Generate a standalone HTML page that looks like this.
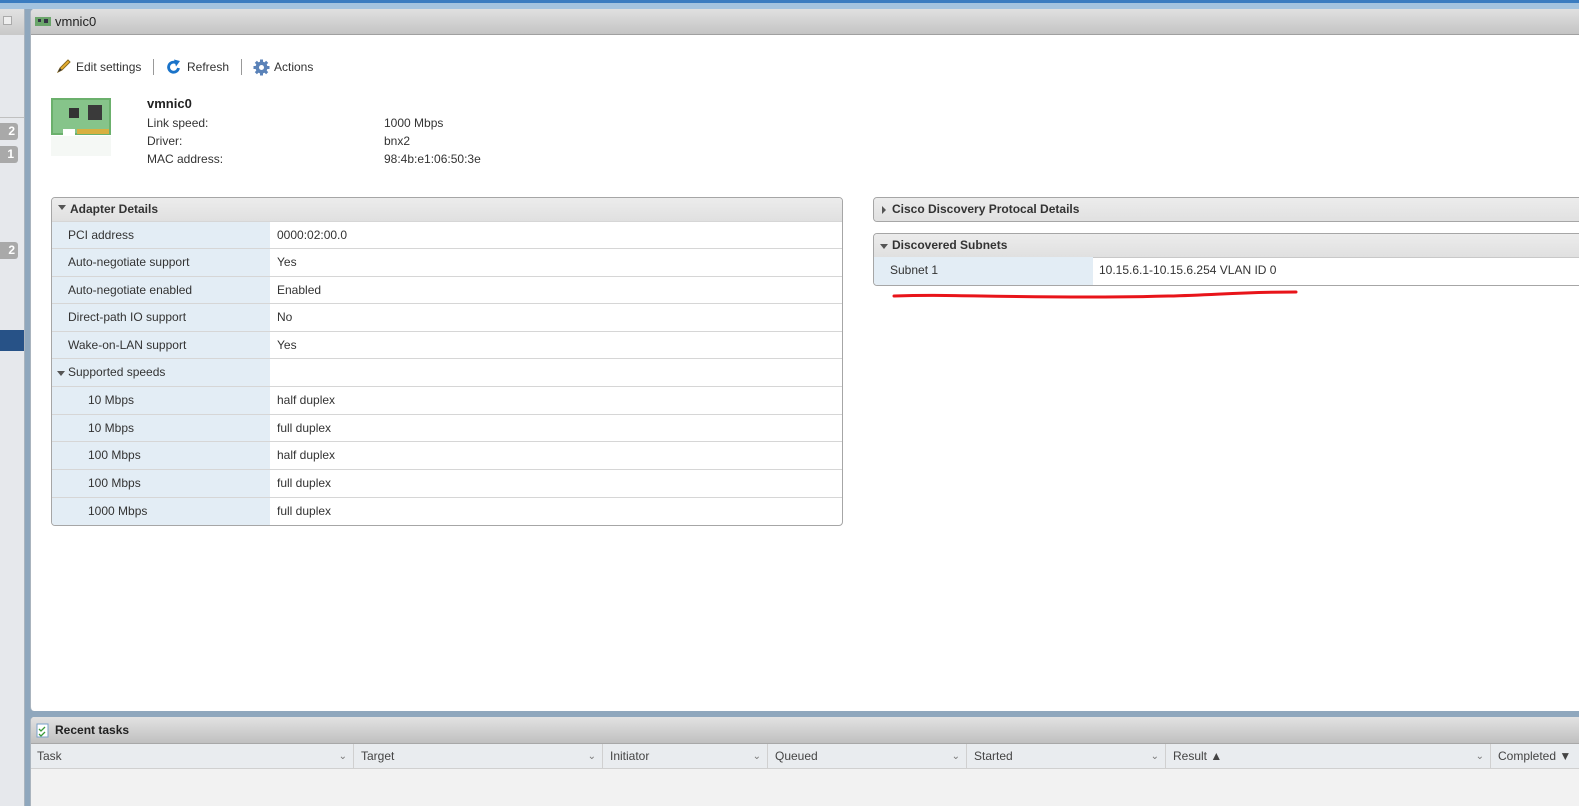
<!DOCTYPE html>
<html><head><meta charset="utf-8"><style>
*{box-sizing:border-box;margin:0;padding:0}
body{width:1579px;height:806px;overflow:hidden;position:relative;background:#8fa7bd;font-family:"Liberation Sans",Arial,sans-serif;font-size:12px;color:#333}
.a{position:absolute}
.t{position:absolute;white-space:nowrap}
.box{position:absolute;border:1px solid #a6a6a6;border-radius:4px;background:#fff;overflow:hidden}
.hd{position:absolute;left:0;right:0;top:0;height:24px;background:linear-gradient(#ececec,#e0e0e0);border-bottom:1px solid #c8c8c8;font-weight:bold;color:#333;font-size:12px;line-height:23px;padding-left:18px}
.row{position:absolute;left:0;right:0;border-top:1px solid #d6d6d6;height:28px;line-height:27px}
.lb{position:absolute;left:0;top:0;bottom:0;background:#e3edf5;padding-left:16px}
.vl{position:absolute;top:0}
.col{position:absolute;top:0;height:25px;line-height:25px;border-right:1px solid #d0d0d0;padding-left:7px;color:#444}
.col i{position:absolute;right:6px;top:0;font-style:normal;font-size:10px;color:#777}
</style></head><body>
<!-- top strip -->
<div class="a" style="left:0;top:0;width:1579px;height:3px;background:#3a7cc0"></div>
<div class="a" style="left:0;top:3px;width:1579px;height:6px;background:#a3c3df"></div>
<!-- sidebar -->
<div class="a" style="left:0;top:9px;width:25px;height:797px;background:#e6e8ec;border-right:1px solid #aab4be"></div>
<div class="a" style="left:0;top:9px;width:24px;height:26px;background:linear-gradient(#e2e2e2,#c9c9c9)"></div>
<div class="a" style="left:3px;top:16px;width:9px;height:9px;border:1px solid #aaa;background:#eee"></div>
<div class="a" style="left:0;top:117px;width:24px;height:1px;background:#c0c0c0"></div>
<div class="t" style="left:0;top:123px;width:18px;height:17px;background:#a9a9a9;color:#fff;font-weight:bold;text-align:right;padding-right:3px;line-height:17px;border-radius:0 3px 3px 0">2</div>
<div class="t" style="left:0;top:146px;width:18px;height:17px;background:#a9a9a9;color:#fff;font-weight:bold;text-align:right;padding-right:4px;line-height:17px;border-radius:0 3px 3px 0">1</div>
<div class="t" style="left:0;top:242px;width:18px;height:17px;background:#a9a9a9;color:#fff;font-weight:bold;text-align:right;padding-right:3px;line-height:17px;border-radius:0 3px 3px 0">2</div>
<div class="a" style="left:0;top:330px;width:24px;height:21px;background:#275287"></div>
<!-- main panel -->
<div class="a" style="left:30px;top:9px;width:1560px;height:702px;background:#fff;border-left:1px solid #aab4be;border-radius:4px 0 0 4px;overflow:hidden">
 <div class="a" style="left:0;top:0;width:100%;height:26px;background:linear-gradient(#e0e0e0,#c4c4c4);border-bottom:1px solid #a0a0a0"></div>
</div>
<svg class="a" style="left:35px;top:17px" width="16" height="9"><rect width="16" height="9" fill="#6aa56a"/><rect x="3" y="2" width="3" height="3" fill="#334"/><rect x="9" y="2" width="4" height="4" fill="#334"/></svg>
<div class="t" style="left:55px;top:14px;font-size:13px;color:#222">vmnic0</div>
<!-- toolbar -->
<svg class="a" style="left:56px;top:58px" width="16" height="16"><path d="M2 14 L4 10 L12 2 L14 4 L6 12 Z" fill="#e8b030" stroke="#8a6a20" stroke-width="1"/><path d="M2 14 L4 10 L6 12Z" fill="#333"/></svg>
<div class="t" style="left:76px;top:60px;color:#333">Edit settings</div>
<div class="a" style="left:153px;top:59px;width:1px;height:16px;background:#999"></div>
<svg class="a" style="left:166px;top:59px" width="16" height="16"><path d="M12.5 9 A5 5 0 1 1 10 3.8" fill="none" stroke="#1a73c9" stroke-width="2.8"/><path d="M8 0.5 L14 2 L10 7.5Z" fill="#1a73c9"/></svg>
<div class="t" style="left:187px;top:60px">Refresh</div>
<div class="a" style="left:241px;top:59px;width:1px;height:16px;background:#999"></div>
<svg class="a" style="left:253px;top:59px" width="17" height="17" viewBox="0 0 17 17"><g fill="#5a82b8"><circle cx="8.5" cy="8.5" r="6"/><rect x="7" y="0.5" width="3" height="16"/><rect x="0.5" y="7" width="16" height="3"/><rect x="7" y="0.5" width="3" height="16" transform="rotate(45 8.5 8.5)"/><rect x="7" y="0.5" width="3" height="16" transform="rotate(-45 8.5 8.5)"/></g><circle cx="8.5" cy="8.5" r="2.5" fill="#fff"/></svg>
<div class="t" style="left:274px;top:60px">Actions</div>
<!-- nic image -->
<svg class="a" style="left:51px;top:98px" width="60" height="60"><rect x="0" y="0" width="60" height="37" fill="#6bb06c"/><rect x="2" y="2" width="56" height="33" fill="#86c48a"/><rect x="18" y="10" width="10" height="10" fill="#333"/><rect x="37" y="7" width="14" height="15" fill="#3a3a3a"/><rect x="12" y="31" width="12" height="6" fill="#fff"/><rect x="26" y="31" width="32" height="5" fill="#d8b040"/><rect x="0" y="38" width="60" height="20" fill="#eef3ee" opacity=".6"/></svg>
<div class="t" style="left:147px;top:96px;font-weight:bold;font-size:13px;color:#222">vmnic0</div>
<div class="t" style="left:147px;top:116px">Link speed:</div>
<div class="t" style="left:147px;top:134px">Driver:</div>
<div class="t" style="left:147px;top:152px">MAC address:</div>
<div class="t" style="left:384px;top:116px">1000 Mbps</div>
<div class="t" style="left:384px;top:134px">bnx2</div>
<div class="t" style="left:384px;top:152px">98:4b:e1:06:50:3e</div>
<!-- adapter details -->
<div class="box" style="left:51px;top:197px;width:792px;height:329px">
 <div class="hd">Adapter Details</div>
 <div class="t" style="left:6px;top:7px;width:0;height:0;border-left:4px solid transparent;border-right:4px solid transparent;border-top:5px solid #555"></div>
 <div class="row" style="top:23px"><div class="lb" style="width:218px">PCI address</div><div class="vl" style="left:225px">0000:02:00.0</div></div>
 <div class="row" style="top:50px"><div class="lb" style="width:218px">Auto-negotiate support</div><div class="vl" style="left:225px">Yes</div></div>
 <div class="row" style="top:78px"><div class="lb" style="width:218px">Auto-negotiate enabled</div><div class="vl" style="left:225px">Enabled</div></div>
 <div class="row" style="top:105px"><div class="lb" style="width:218px">Direct-path IO support</div><div class="vl" style="left:225px">No</div></div>
 <div class="row" style="top:133px"><div class="lb" style="width:218px">Wake-on-LAN support</div><div class="vl" style="left:225px">Yes</div></div>
 <div class="row" style="top:160px"><div class="lb" style="width:218px">Supported speeds</div><div class="a" style="left:5px;top:12px;border-left:4px solid transparent;border-right:4px solid transparent;border-top:5px solid #555"></div></div>
 <div class="row" style="top:188px"><div class="lb" style="width:218px;padding-left:36px">10 Mbps</div><div class="vl" style="left:225px">half duplex</div></div>
 <div class="row" style="top:216px"><div class="lb" style="width:218px;padding-left:36px">10 Mbps</div><div class="vl" style="left:225px">full duplex</div></div>
 <div class="row" style="top:243px"><div class="lb" style="width:218px;padding-left:36px">100 Mbps</div><div class="vl" style="left:225px">half duplex</div></div>
 <div class="row" style="top:271px"><div class="lb" style="width:218px;padding-left:36px">100 Mbps</div><div class="vl" style="left:225px">full duplex</div></div>
 <div class="row" style="top:299px"><div class="lb" style="width:218px;padding-left:36px">1000 Mbps</div><div class="vl" style="left:225px">full duplex</div></div>
</div>
<!-- cisco -->
<div class="box" style="left:873px;top:197px;width:720px;height:25px;background:#e8e8e8">
 <div class="hd" style="border-bottom:none;height:25px">Cisco Discovery Protocal Details</div>
 <div class="a" style="left:8px;top:8px;border-top:4px solid transparent;border-bottom:4px solid transparent;border-left:4px solid #555"></div>
</div>
<div class="box" style="left:873px;top:233px;width:720px;height:53px">
 <div class="hd">Discovered Subnets</div>
 <div class="a" style="left:6px;top:10px;border-left:4px solid transparent;border-right:4px solid transparent;border-top:5px solid #555"></div>
 <div class="row" style="top:23px;border-top:none"><div class="lb" style="width:219px">Subnet 1</div><div class="vl" style="left:225px">10.15.6.1-10.15.6.254 VLAN ID 0</div></div>
</div>
<svg class="a" style="left:890px;top:286px" width="412" height="16"><path d="M4 10 C60 8 80 11 200 11 C320 11 330 6 406 6" fill="none" stroke="#e8141a" stroke-width="3" stroke-linecap="round"/></svg>
<!-- recent tasks -->
<div class="a" style="left:30px;top:717px;width:1560px;height:89px;background:#f2f2f2;border-left:1px solid #aab4be;border-radius:4px 0 0 0;overflow:hidden">
 <div class="a" style="left:0;top:0;width:100%;height:27px;background:linear-gradient(#e2e2e2,#c0c0c0);border-bottom:1px solid #a8a8a8"></div>
 <div class="a" style="left:0;top:27px;width:100%;height:25px;background:#e9ecef;border-bottom:1px solid #d0d0d0"></div>
</div>
<svg class="a" style="left:36px;top:722px" width="13" height="16"><rect x="1" y="2" width="11" height="13" fill="#fff" stroke="#7aa0c8"/><path d="M3 7 L5 9 L9 5 M3 12 L5 14 L9 10" stroke="#3a9a3a" fill="none" stroke-width="1.3"/></svg>
<div class="t" style="left:55px;top:723px;font-weight:bold;color:#222">Recent tasks</div>
<div class="a" style="left:30px;top:744px;height:25px;width:1560px">
 <div class="col" style="left:0;width:324px">Task<i>&#8964;</i></div>
 <div class="col" style="left:324px;width:249px">Target<i>&#8964;</i></div>
 <div class="col" style="left:573px;width:165px">Initiator<i>&#8964;</i></div>
 <div class="col" style="left:738px;width:199px">Queued<i>&#8964;</i></div>
 <div class="col" style="left:937px;width:199px">Started<i>&#8964;</i></div>
 <div class="col" style="left:1136px;width:325px">Result &#9650;<i>&#8964;</i></div>
 <div class="col" style="left:1461px;width:200px;border:none">Completed &#9660;</div>
</div>
</body></html>
